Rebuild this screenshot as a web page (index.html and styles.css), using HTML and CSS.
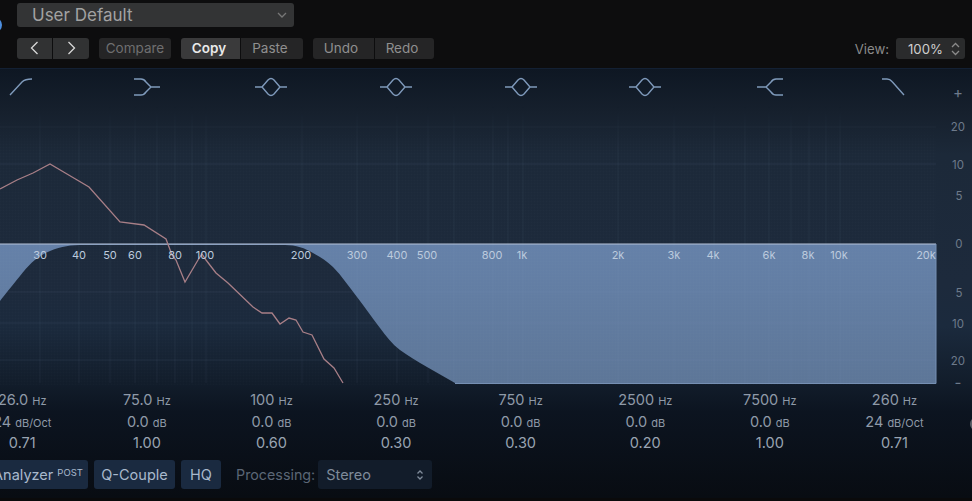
FILE: index.html
```html
<!DOCTYPE html>
<html lang="en">
<head>
  <meta charset="UTF-8" />
  <meta name="viewport" content="width=device-width, initial-scale=1" />
  <title>Channel EQ</title>
  <link rel="stylesheet" href="styles.css">
</head>
<body>

  <header class="topbar">
    <span class="power"></span>
    <div class="preset">
      <span>User Default</span>
      <svg class="chevron" width="10" height="6" viewBox="0 0 10 6"><path d="M1 1l4 4 4-4" /></svg>
    </div>
    <div class="toolbar">
      <div class="seg">
        <button class="btn btn-arrow btn-prev"><svg width="9" height="14" viewBox="0 0 9 14"><path d="M7.500 1L1.500 7l6 6" /></svg></button>
        <button class="btn btn-arrow"><svg width="9" height="14" viewBox="0 0 9 14"><path d="M1.500 1l6 6-6 6" /></svg></button>
      </div>
      <div class="seg"><button class="btn btn-dim">Compare</button></div>
      <div class="seg">
        <button class="btn btn-on btn-copy">Copy</button>
        <button class="btn btn-paste">Paste</button>
      </div>
      <div class="seg">
        <button class="btn btn-undo">Undo</button>
        <button class="btn btn-redo">Redo</button>
      </div>
      <div class="view">
        <span class="view-label">View:</span>
        <div class="view-select">
          <span>100%</span>
          <svg width="9" height="14" viewBox="0 0 9 14"><path d="M1 5l3.500-3.500L8 5M1 9l3.500 3.500L8 9" /></svg>
        </div>
      </div>
    </div>
  </header>

  <main class="panel">
    <!-- band shape icons, same columns as the params below -->
    <div class="bands">
      <svg width="32" height="20" viewBox="0 0 32 20"><path d="M4 18L16 5Q19 2 26 2" /></svg>
      <svg width="32" height="20" viewBox="0 0 32 20"><path d="M3 2H10Q13 2 15 5L20 10H29M3 18H10Q13 18 15 15L20 10" /></svg>
      <svg width="32" height="20" viewBox="0 0 32 20"><path d="M0 10H7M25 10H32M7 10L13 3Q16 0 19 3L25 10L19 17Q16 20 13 17Z" /></svg>
      <svg width="32" height="20" viewBox="0 0 32 20"><path d="M0 10H7M25 10H32M7 10L13 3Q16 0 19 3L25 10L19 17Q16 20 13 17Z" /></svg>
      <svg width="32" height="20" viewBox="0 0 32 20"><path d="M0 10H7M25 10H32M7 10L13 3Q16 0 19 3L25 10L19 17Q16 20 13 17Z" /></svg>
      <svg width="32" height="20" viewBox="0 0 32 20"><path d="M0 10H7M25 10H32M7 10L13 3Q16 0 19 3L25 10L19 17Q16 20 13 17Z" /></svg>
      <svg width="32" height="20" viewBox="0 0 32 20"><path d="M3 10H12L17 5Q19 2 22 2H29M12 10L17 15Q19 18 22 18H29" /></svg>
      <svg width="32" height="20" viewBox="0 0 32 20"><path d="M4 2H9Q12 2 14 4.500L26 18" /></svg>
    </div>

    <!-- viewBox uses page coordinates so the numbers read off the screenshot -->
    <svg class="graph" width="972" height="280" viewBox="0 105 972 280">
      <defs>
        <pattern id="dots" width="3" height="3" patternUnits="userSpaceOnUse">
          <path d="M0 0H3M0 0V3" class="dot-line" />
        </pattern>
        <linearGradient id="fillShade" x1="0" y1="0" x2="0" y2="1">
          <stop offset="0" stop-color="#6581a9" />
          <stop offset="1" stop-color="#5d7698" />
        </linearGradient>
        <linearGradient id="topFade" gradientUnits="userSpaceOnUse" x1="0" y1="105" x2="0" y2="150">
          <stop offset="0" stop-color="#000" />
          <stop offset="1" stop-color="#fff" />
        </linearGradient>
        <mask id="gridMask" maskUnits="userSpaceOnUse" x="0" y="105" width="972" height="280">
          <rect x="0" y="105" width="972" height="280" fill="url(#topFade)" />
        </mask>
      </defs>

      <path fill="url(#fillShade)" d="M0 244H936V383H455L427 367C417 361 408 356 400 350C392 344 386 336 380 328C372 318 365 307 357 297C349 287 342 276 333 267C327 261 320 257 313 253C305 248 296 245 285 245H85C70 245 62 246 50 251C38 256 30 263 20 276C12 286 6 293 0 301Z" />

      <g mask="url(#gridMask)">
        <rect x="0" y="105" width="936" height="280" fill="url(#dots)" />
        <path class="grid-v" d="M40 105V383M79 105V383M110 105V383M135 105V383M157 105V383M175 105V383M192 105V383M206 105V383M302 105V383M357 105V383M397 105V383M428 105V383M454 105V383M493 105V383M508 105V383M523 105V383M618 105V383M674 105V383M714 105V383M745 105V383M769 105V383M791 105V383M809 105V383M826 105V383M840 105V383" />
        <path class="grid-h" d="M0 127H936M0 164H936M0 292H936M0 323H936M0 360H936" />
      </g>

      <path class="zero" d="M0 244H936" />
      <path class="edge" d="M455 383.500H936V244" />

      <path class="analyzer" d="M0 189L17 180L33 173L50 164L67 174L89 187L120 222L144 225L166 239L172 255L176 260L185 282L198 260L202 254L206 260L216 273L228 283L253 307L262 313L272 313L280 324L289 318L296 320L303 332L312 335L324 359L334 368L343 383" />

      <g class="freq">
        <text x="40" y="259">30</text>
        <text x="79" y="259">40</text>
        <text x="110" y="259">50</text>
        <text x="135" y="259">60</text>
        <text x="175" y="259">80</text>
        <text x="205" y="259">100</text>
        <text x="301" y="259">200</text>
        <text x="357" y="259">300</text>
        <text x="397" y="259">400</text>
        <text x="427" y="259">500</text>
        <text x="492" y="259">800</text>
        <text x="522" y="259">1k</text>
        <text x="618" y="259">2k</text>
        <text x="674" y="259">3k</text>
        <text x="713" y="259">4k</text>
        <text x="769" y="259">6k</text>
        <text x="808" y="259">8k</text>
        <text x="839" y="259">10k</text>
        <text x="926" y="259">20k</text>
      </g>
      <g class="scale">
        <text class="scale-sign" x="958" y="98">+</text>
        <text x="958" y="131">20</text>
        <text x="958" y="169">10</text>
        <text x="959" y="200">5</text>
        <text x="959" y="248">0</text>
        <text x="959" y="297">5</text>
        <text x="958" y="328">10</text>
        <text x="958" y="365">20</text>
        <text class="scale-sign" x="958" y="388">-</text>
      </g>
    </svg>

    <div class="params">
      <div class="param"><div class="val val-freq">26.0 <small>Hz</small></div><div class="val val-gain">24 <small>dB/Oct</small></div><div class="val val-q">0.71</div></div>
      <div class="param"><div class="val val-freq">75.0 <small>Hz</small></div><div class="val val-gain">0.0 <small>dB</small></div><div class="val val-q">1.00</div></div>
      <div class="param"><div class="val val-freq">100 <small>Hz</small></div><div class="val val-gain">0.0 <small>dB</small></div><div class="val val-q">0.60</div></div>
      <div class="param"><div class="val val-freq">250 <small>Hz</small></div><div class="val val-gain">0.0 <small>dB</small></div><div class="val val-q">0.30</div></div>
      <div class="param"><div class="val val-freq">750 <small>Hz</small></div><div class="val val-gain">0.0 <small>dB</small></div><div class="val val-q">0.30</div></div>
      <div class="param"><div class="val val-freq">2500 <small>Hz</small></div><div class="val val-gain">0.0 <small>dB</small></div><div class="val val-q">0.20</div></div>
      <div class="param"><div class="val val-freq">7500 <small>Hz</small></div><div class="val val-gain">0.0 <small>dB</small></div><div class="val val-q">1.00</div></div>
      <div class="param"><div class="val val-freq">260 <small>Hz</small></div><div class="val val-gain">24 <small>dB/Oct</small></div><div class="val val-q">0.71</div></div>
    </div>
    <span class="knob"></span>

    <div class="options">
      <button class="opt opt-analyzer">Analyzer <sup>POST</sup></button>
      <button class="opt opt-couple">Q-Couple</button>
      <button class="opt opt-hq">HQ</button>
      <span class="processing">Processing:</span>
      <div class="opt proc-select">
        <span>Stereo</span>
        <svg width="6" height="10" viewBox="0 0 6 10"><path d="M.500 3.500L3 1l2.500 2.500M.500 6.500L3 9l2.500-2.500" /></svg>
      </div>
    </div>
  </main>

</body>
</html>
```

FILE: styles.css
```css
/* Base styles */
html, body {
  margin: 0;
  height: 501px;
  overflow: hidden;
}

body {
  font-family: Inter, "Liberation Sans", sans-serif;
  background: #0a0a0b;
  color: #9aa5b3;
  width: 972px;
  position: relative;
}

button {
  font-family: inherit;
  border: none;
  padding: 0;
  margin: 0;
}

/* Top bar */
.topbar {
  height: 68px;
  box-sizing: border-box;
  padding: 3px 7px 0 17px;
  background: #0d0d0e;
}

.power {
  position: absolute;
  left: -14px;
  top: 17px;
  width: 16px;
  height: 16px;
  border-radius: 50%;
  background: #4d8fe0;
}

.preset {
  width: 277px;
  height: 24px;
  box-sizing: border-box;
  padding: 0 7px 0 15px;
  display: flex;
  align-items: center;
  justify-content: space-between;
  background: #333435;
  border-radius: 3px;
  font-size: 17px;
  color: #a2a2a2;
}

.preset svg path,
.btn svg path,
.view-select svg path,
.proc-select svg path {
  fill: none;
  stroke-width: 1.300;
}

.chevron path {
  stroke: #777;
}

.toolbar {
  display: flex;
  gap: 10px;
  margin-top: 11px;
  align-items: center;
}

.seg {
  display: flex;
  gap: 1px;
  height: 21px;
}

.btn {
  height: 21px;
  padding-bottom: 1px;
  background: #252526;
  color: #8f8f8f;
  font-size: 13.500px;
  border-radius: 0;
}

.seg .btn:first-child {
  border-radius: 3px 0 0 3px;
}

.seg .btn:last-child {
  border-radius: 0 3px 3px 0;
}

.seg .btn:only-child {
  border-radius: 3px;
}

.btn-arrow {
  width: 36px;
  background: #313233;
  display: flex;
  align-items: center;
  justify-content: center;
}

.btn-prev {
  width: 35px;
}

.btn-arrow path {
  stroke: #d8d8d8;
}

.btn-dim {
  width: 72px;
  color: #6f6f70;
}

.btn-on {
  background: #3a3a3b;
  color: #e9e9e9;
  font-weight: 600;
}

.btn-copy {
  width: 59px;
  padding-right: 3px;
}

.btn-paste {
  width: 62px;
  padding-right: 4px;
}

.btn-undo {
  width: 61px;
  padding-right: 5px;
}

.btn-redo {
  width: 59px;
  padding-right: 5px;
}

.view {
  margin-left: auto;
  display: flex;
  align-items: center;
  gap: 7px;
}

.view-label {
  font-size: 13.200px;
  color: #8a8a8a;
}

.view-select {
  width: 69px;
  height: 21px;
  box-sizing: border-box;
  padding: 0 5px 0 12px;
  display: flex;
  align-items: center;
  justify-content: space-between;
  background: #2a2b2c;
  border-radius: 3px;
  font-size: 13.200px;
  color: #cfcfcf;
}

.view-select path {
  stroke: #8a8a8a;
}

/* Main EQ panel */
.panel {
  height: 430px;
  border-top: 1px solid #132033;
  box-sizing: border-box;
  background: linear-gradient(#0e1723 0, #16202d 10%, #1c2939 20%, #1d2a3c 50%, #1b2a3d 60%, #121d2b 73%, #0c1420 80%, #080c12 100%);
  position: relative;
}

.bands {
  display: grid;
  grid-template-columns: repeat(8, 124.600px);
  margin-left: -40px;
  height: 36px;
  padding-top: 8px;
  box-sizing: border-box;
  justify-items: center;
}

.bands svg {
  fill: none;
  stroke: #7f9abb;
  stroke-width: 1.400;
}

.graph {
  display: block;
  overflow: visible;
}

.dot-line {
  stroke: #ffffff;
  stroke-opacity: 0.012;
  stroke-width: 1;
  fill: none;
}

.grid-v {
  stroke: #8ea4c2;
  stroke-opacity: 0.07;
  stroke-width: 1;
  fill: none;
}

.grid-h {
  stroke: #8ea4c2;
  stroke-opacity: 0.1;
  stroke-width: 1;
  fill: none;
}

.zero {
  stroke: #b5c4d9;
  stroke-width: 1.200;
  fill: none;
}

.edge {
  stroke: #7690b3;
  stroke-width: 1;
  fill: none;
}

.analyzer {
  stroke: #a87f87;
  stroke-width: 1.300;
  fill: none;
}

.freq text {
  font-size: 11px;
  fill: #bccadd;
  text-anchor: middle;
}

.scale text {
  font-size: 11.500px;
  fill: #6d7a8b;
  text-anchor: middle;
}

.scale .scale-sign {
  font-size: 15px;
}

.params {
  display: grid;
  grid-template-columns: repeat(8, 124.600px);
  margin-left: -40px;
  height: 69px;
  text-align: center;
  color: #8f9aa8;
}

.val {
  font-size: 14.500px;
  white-space: nowrap;
}

.val small {
  font-size: 11px;
}

.val-freq {
  padding-top: 6px;
  height: 22px;
}

.val-gain {
  height: 21px;
}

.val-q {
  color: #99a4b2;
}

.knob {
  position: absolute;
  right: -8px;
  top: 349px;
  width: 10px;
  height: 12px;
  border-radius: 50%;
  background: #5b6068;
}

/* Analyzer / processing row */
.options {
  display: flex;
  align-items: center;
  gap: 6px;
  margin: 6px 0 0 -12px;
}

.opt {
  height: 29px;
  padding-bottom: 1px;
  background: #1a2a40;
  color: #a9b9cd;
  font-size: 14.500px;
  border-radius: 3px;
}

.opt-analyzer {
  width: 100px;
}

.opt-analyzer sup {
  font-size: 9.500px;
  vertical-align: 4px;
  line-height: 0;
}

.opt-couple {
  width: 81px;
}

.opt-hq {
  width: 40px;
}

.processing {
  margin-left: 9px;
  font-size: 14.300px;
  color: #5b6675;
}

.proc-select {
  width: 114px;
  box-sizing: border-box;
  padding: 0 9px 0 8px;
  margin-left: -3px;
  display: flex;
  align-items: center;
  justify-content: space-between;
  background: #121c2a;
  color: #7f8b9a;
}

.proc-select path {
  stroke: #7f8b9a;
}
```
